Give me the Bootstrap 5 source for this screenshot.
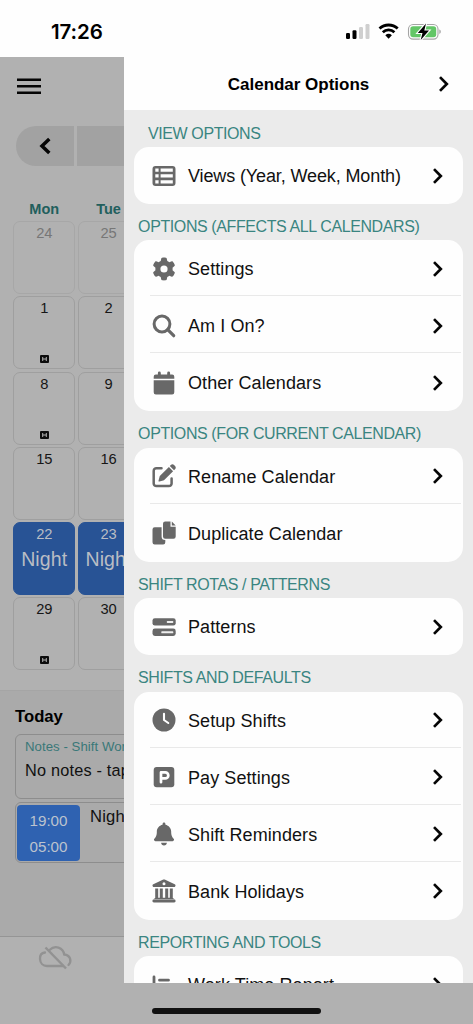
<!DOCTYPE html>
<html lang="en">
<head>
<meta charset="utf-8">
<meta name="viewport" content="width=device-width, initial-scale=1">
<title>Calendar Options</title>
<link rel="stylesheet" href="https://cdn.jsdelivr.net/npm/bootstrap@5.3.0/dist/css/bootstrap.min.css">
<style>
body{font-family:"Liberation Sans",Arial,sans-serif;background:#b1b1b1;color:#111;height:1024px;overflow:hidden;line-height:1}
.status{height:57px;background:#fefefe;padding:6px 31px 0 51px}
.clock{font:600 20.5px/1 Inter,sans-serif;letter-spacing:-.1px;color:#000;padding-top:1px}
.stage{height:926px}
.under{width:124px;background:#b1b1b1}
.topline{height:69px;padding:21px 0 0 17px}
.switcher{padding-left:16px;gap:2.5px}
.prev{width:58px;height:40px;background:#a2a2a2;border-radius:20px 0 0 20px}
.month-name{width:200px;height:40px;background:#a2a2a2}
.week{gap:2.5px;padding-left:13.3px;margin-bottom:2.3px}
.week-head{margin-top:36px;margin-bottom:4.5px}
.dow{width:61.8px;font-size:14.5px;font-weight:700;color:#215f5d}
.day{width:61.8px;height:73px;border:1px solid #9f9f9f;border-radius:7px;padding-top:4px;font-size:14.7px;letter-spacing:-.2px;color:#161616}
.day.faded{color:#777;border-color:#a7a7a7}
.day.night{background:#285395;border-color:#285395;color:#b9bdc4}
.shift{font-size:19.5px;letter-spacing:.1px;margin-top:8px}
.hol{width:9px;height:8px;margin-bottom:5px}
.today{margin-top:20px;height:247px;background:#aaa;border-top:1px solid #a5a5a5;border-bottom:1px solid #959595;padding:17px 0 0 15px}
.today h2{font-size:16.7px;font-weight:700;color:#000;margin:0;line-height:17px}
.note,.entry{width:300px;border:1px solid #8d8d8d;border-radius:6px}
.note{height:65px;margin-top:9px;padding:5px 9px}
.note-title{font-size:13.2px;letter-spacing:.05px;color:#397878}
.note-text{font-size:16.3px;letter-spacing:.2px;margin-top:8px}
.entry{height:61px;margin-top:3px;padding:2px 1px}
.hours{width:63px;height:56px;background:#2f62b1;border-radius:4px;color:#bcc3ce;font-size:15.2px;gap:10.5px}
.entry-name{font-size:16.6px;letter-spacing:.2px;padding:4px 0 0 10px}
.tabs{padding:6px 0 0 37px}
.drawer{width:349px;background:#ebebeb}
.drawer-head{height:53px;background:#fefefe;padding:1px 22px 0 36px}
.drawer-head h1{font-size:17px;font-weight:700;color:#000;margin:0;padding-top:2px;letter-spacing:-.02px}
.groups{padding:.7px 9.7px 0 9.5px}
.label-row{height:36.4px;padding:15px 0 0 4.6px;font-size:16px;letter-spacing:-.4px;color:#3a8581}
.label-first{padding-left:14.5px}
.options{background:#fefefe;border-radius:15px}
.option{height:57px;padding:0 18px 0 18px;font-size:18px;letter-spacing:.08px;position:relative}
.option span{margin-left:12.5px;padding-top:1px}
.option .tight{letter-spacing:-.12px}
.option:not(:last-child)::after{content:"";position:absolute;left:16px;right:2px;bottom:1px;height:1px;background:#e9e9e9}
.option .ico{width:24px;height:24px;fill:#686868}
.go{width:14px;height:18px;fill:none;stroke:#050505;stroke-width:2.7}
.home-zone{height:41px;background:#b1b1b1;padding-top:25px}
.home-bar{width:169px;height:6px;border-radius:3px;background:#111}
</style>
</head>
<body class="d-flex flex-column">
<svg class="d-none"><symbol id="go" viewBox="0 0 14 18"><path d="M3 2.1 9.8 9 3 15.9"/></symbol>
<symbol id="hol" viewBox="0 0 9 8"><rect width="9" height="8" rx="1" fill="#0c0c0c"/><path d="M2.7 2v4M6.3 2v4M2.7 4h3.6" stroke="#b1b1b1" stroke-width="1"/></symbol></svg>

<header class="status d-flex align-items-center justify-content-between flex-shrink-0">
  <div class="clock">17:26</div>
  <svg width="98" height="20" viewBox="0 1 98 20">
    <rect x="2" y="12" width="4" height="6" rx="1.2"/><rect x="8.5" y="9.3" width="4" height="8.7" rx="1.2"/>
    <g fill="#cfcfcf"><rect x="15" y="6" width="4" height="12" rx="1.2"/><rect x="21.5" y="3" width="4" height="15" rx="1.2"/></g>
    <g fill="none" stroke="#000" stroke-width="2.8"><path d="M35.5 7.600a13.300 13.300 0 0 1 18.200 0"/><path d="M38.800 11.200a8.400 8.400 0 0 1 11.600 0"/></g>
    <path d="M41.300 14.200a5 5 0 0 1 6.600 0l-3.300 3.600z"/>
    <rect x="64.500" y="3.500" width="29.500" height="14.600" rx="4.600" fill="none" stroke="#a5a5a5" stroke-width="1.100"/>
    <rect x="66.300" y="5.300" width="25.900" height="11" rx="2.800" fill="#63c667"/><path d="M95.300 8.600c2 .6 2 3.800 0 4.400z" fill="#a5a5a5"/>
    <path d="M82 2.500 73.800 11.900h4.700L76.700 19 85 9.500h-4.700z" stroke="#fefefe" stroke-width="2.200" paint-order="stroke"/>
  </svg>
</header>

<main class="stage d-flex flex-shrink-0">
  <section class="under overflow-hidden flex-shrink-0">
    <div class="topline"><svg width="24" height="17" viewBox="0 0 24 17" class="d-block"><path d="M0 1.700h24M0 8.200h24M0 14.700h24" stroke="#050505" stroke-width="2.400"/></svg></div>
    <div class="switcher d-flex">
      <div class="prev d-flex align-items-center justify-content-center flex-shrink-0"><svg width="14" height="18" viewBox="0 0 14 18"><path d="M11.300 2 4 9l7.300 7" fill="none" stroke="#050505" stroke-width="3.500"/></svg></div>
      <div class="month-name flex-shrink-0"></div>
    </div>
    <div class="week week-head d-flex text-center"><div class="dow flex-shrink-0">Mon</div><div class="dow flex-shrink-0">Tue</div></div>
    <div class="week d-flex"><div class="day faded text-center flex-shrink-0">24</div><div class="day faded text-center flex-shrink-0">25</div></div>
    <div class="week d-flex"><div class="day flex-shrink-0 d-flex flex-column align-items-center justify-content-between">1<svg class="hol"><use href="#hol"/></svg></div><div class="day text-center flex-shrink-0">2</div></div>
    <div class="week d-flex"><div class="day flex-shrink-0 d-flex flex-column align-items-center justify-content-between">8<svg class="hol"><use href="#hol"/></svg></div><div class="day text-center flex-shrink-0">9</div></div>
    <div class="week d-flex"><div class="day text-center flex-shrink-0">15</div><div class="day text-center flex-shrink-0">16</div></div>
    <div class="week d-flex"><div class="day night text-center flex-shrink-0">22<div class="shift">Night</div></div><div class="day night text-center flex-shrink-0">23<div class="shift">Night</div></div></div>
    <div class="week d-flex"><div class="day flex-shrink-0 d-flex flex-column align-items-center justify-content-between">29<svg class="hol"><use href="#hol"/></svg></div><div class="day text-center flex-shrink-0">30</div></div>
    <div class="today">
      <h2>Today</h2>
      <div class="note text-nowrap"><div class="note-title">Notes - Shift Work</div><div class="note-text">No notes - tap</div></div>
      <div class="entry d-flex"><div class="hours d-flex flex-column align-items-center justify-content-center"><div>19:00</div><div>05:00</div></div><div class="entry-name">Night</div></div>
    </div>
    <div class="tabs"><svg width="36" height="30" viewBox="0 0 36 30" fill="none" stroke="#929292" stroke-width="2.300" stroke-linecap="round"><path d="M8 9.500C4.300 10 2.800 13 3 16c.200 4 3 7 7 7h16M12.500 7C18 1.500 26.200 4.500 27.200 11.500c6 .500 8 6.500 4.300 10.500"/><path d="M8.500 4.500 29 25.500" stroke-linecap="butt" stroke-width="2.500"/></svg></div>
  </section>

  <aside class="drawer overflow-hidden flex-shrink-0">
    <div class="drawer-head d-flex align-items-center"><h1 class="flex-grow-1 text-center">Calendar Options</h1><svg class="go"><use href="#go"/></svg></div>
    <div class="groups">
      <div class="label-row label-first">VIEW OPTIONS</div>
      <div class="options">
        <div class="option d-flex align-items-center"><svg class="ico" viewBox="0 0 24 24"><path fill-rule="evenodd" d="M3.500 2h17A3 3 0 0 1 23.500 5v14a3 3 0 0 1-3 3h-17a3 3 0 0 1-3-3V5a3 3 0 0 1 3-3zM3.300 4.500v3.300h3.300V4.500zM8.600 4.500v3.300h12.200V4.500zM3.300 10.300v3.300h3.300v-3.300zM8.600 10.300v3.300h12.200v-3.300zM3.300 16.200v3.300h3.300v-3.300zM8.600 16.200v3.300h12.200v-3.300z"/></svg><span class="tight">Views (Year, Week, Month)</span><svg class="go ms-auto"><use href="#go"/></svg></div>
      </div>
      <div class="label-row">OPTIONS (AFFECTS ALL CALENDARS)</div>
      <div class="options">
        <div class="option d-flex align-items-center"><svg class="ico" viewBox="-11 -11 534 534"><path d="M495.900 166.600c3.200 8.700.5 18.400-6.400 24.600l-43.300 39.400c1.100 8.300 1.700 16.800 1.700 25.400s-.6 17.100-1.700 25.400l43.300 39.400c6.900 6.200 9.600 15.900 6.400 24.600-4.400 11.900-9.700 23.300-15.800 34.300l-4.700 8.100c-6.600 11-14 21.400-22.100 31.200-5.900 7.200-15.700 9.600-24.500 6.800l-55.700-17.700c-13.400 10.300-28.200 18.900-44 25.400l-12.500 57.100c-2 9.100-9 16.300-18.200 17.800-13.800 2.300-28 3.500-42.500 3.500s-28.700-1.200-42.500-3.500c-9.200-1.500-16.200-8.700-18.200-17.800l-12.500-57.100c-15.800-6.500-30.600-15.100-44-25.400L83.100 425.900c-8.800 2.800-18.600.3-24.500-6.800-8.100-9.800-15.500-20.200-22.100-31.200l-4.700-8.100c-6.100-11-11.400-22.400-15.800-34.300-3.200-8.700-.5-18.400 6.400-24.600l43.300-39.400C64.600 273.100 64 264.600 64 256s.6-17.100 1.700-25.400L22.400 191.200c-6.900-6.200-9.600-15.900-6.400-24.600 4.400-11.900 9.700-23.300 15.800-34.300l4.700-8.100c6.600-11 14-21.400 22.100-31.200 5.900-7.200 15.700-9.600 24.500-6.800l55.700 17.700c13.400-10.300 28.200-18.900 44-25.400l12.500-57.100c2-9.100 9-16.300 18.200-17.800C227.300 1.200 241.500 0 256 0s28.700 1.200 42.500 3.500c9.200 1.500 16.200 8.700 18.200 17.800l12.500 57.100c15.800 6.500 30.600 15.100 44 25.400l55.700-17.700c8.800-2.800 18.600-.3 24.500 6.800 8.100 9.800 15.500 20.200 22.100 31.200l4.700 8.100c6.100 11 11.400 22.400 15.800 34.300zM256 336a80 80 0 1 0 0-160 80 80 0 1 0 0 160z"/></svg><span>Settings</span><svg class="go ms-auto"><use href="#go"/></svg></div>
        <div class="option d-flex align-items-center"><svg class="ico" viewBox="0 0 24 24"><g fill="none" stroke="#686868"><circle cx="10" cy="10" r="7.900" stroke-width="3"/><path d="m15.700 15.700 6 6" stroke-width="3.200" stroke-linecap="round"/></g></svg><span>Am I On?</span><svg class="go ms-auto"><use href="#go"/></svg></div>
        <div class="option d-flex align-items-center"><svg class="ico" viewBox="0 0 24 24"><path d="M5.900 2a1.400 1.400 0 0 1 2.900 0v1.500h6.400V2a1.400 1.400 0 0 1 2.900 0v1.500h2A2.200 2.200 0 0 1 22.300 5.700v2H1.700v-2A2.200 2.200 0 0 1 3.900 3.500h2zM1.700 9.200h20.600v12a2.200 2.200 0 0 1-2.200 2.200H3.900a2.200 2.200 0 0 1-2.200-2.200z"/></svg><span>Other Calendars</span><svg class="go ms-auto"><use href="#go"/></svg></div>
      </div>
      <div class="label-row">OPTIONS (FOR CURRENT CALENDAR)</div>
      <div class="options">
        <div class="option d-flex align-items-center"><svg class="ico" viewBox="0 0 24 24"><path d="M9.500 4.200H4.400a2.700 2.700 0 0 0-2.700 2.700v12.500a2.700 2.700 0 0 0 2.700 2.700h12.500a2.700 2.700 0 0 0 2.700-2.700v-4.900" fill="none" stroke="#686868" stroke-width="2.500" stroke-linecap="round"/><path d="m16.900 3 4.200 4.200-8.600 8.600c-.4.400-.8.600-1.300.8l-3.800 1c-.6.100-1-.3-.9-.9l1-3.800c.1-.5.400-.9.800-1.300zM17.800 2.100l1-1a2.400 2.400 0 0 1 3.300 0l.9.900a2.400 2.400 0 0 1 0 3.300l-1 1z"/></svg><span>Rename Calendar</span><svg class="go ms-auto"><use href="#go"/></svg></div>
        <div class="option d-flex align-items-center"><svg class="ico" viewBox="0 0 24 24"><path d="M13.200.500h5.300v5.300h5.200V15.500a2.200 2.200 0 0 1-2.200 2.200h-8.300A2.200 2.200 0 0 1 11 15.500V2.700A2.200 2.200 0 0 1 13.200.500zM19.800.500l3.900 3.900h-3.900zM2.700 6.300h6.900v9.300a3.500 3.500 0 0 0 3.500 3.500h.2v2.100a2.200 2.200 0 0 1-2.200 2.200H2.700a2.200 2.200 0 0 1-2.200-2.200V8.500a2.200 2.200 0 0 1 2.200-2.200z"/></svg><span>Duplicate Calendar</span></div>
      </div>
      <div class="label-row">SHIFT ROTAS / PATTERNS</div>
      <div class="options">
        <div class="option d-flex align-items-center"><svg class="ico" viewBox="0 0 24 24"><rect x=".5" y="3.200" width="23.200" height="7.400" rx="2.400"/><rect x=".5" y="13.600" width="23.200" height="7.400" rx="2.400"/><g fill="#eee"><rect x="14.800" y="5.900" width="6.500" height="2" rx=".6"/><rect x="9.300" y="16.300" width="12" height="2" rx=".6"/></g></svg><span>Patterns</span><svg class="go ms-auto"><use href="#go"/></svg></div>
      </div>
      <div class="label-row">SHIFTS AND DEFAULTS</div>
      <div class="options">
        <div class="option d-flex align-items-center"><svg class="ico" viewBox="0 0 24 24"><circle cx="12" cy="12" r="11.500"/><path d="M12 5.700V12l4.300 3" fill="none" stroke="#fff" stroke-width="2.100" stroke-linecap="round" stroke-linejoin="round"/></svg><span>Setup Shifts</span><svg class="go ms-auto"><use href="#go"/></svg></div>
        <div class="option d-flex align-items-center"><svg class="ico" viewBox="0 0 24 24"><rect x="1.700" y="1.900" width="20.600" height="20.400" rx="3"/><path d="M9 17.200V7.400h4.300a3 3 0 0 1 0 6H9" fill="none" stroke="#fff" stroke-width="2.700" stroke-linecap="round" stroke-linejoin="round"/></svg><span>Pay Settings</span><svg class="go ms-auto"><use href="#go"/></svg></div>
        <div class="option d-flex align-items-center"><svg class="ico" viewBox="-43 -11 534 534"><path d="M224 0c-17.700 0-32 14.300-32 32v19.200C119 66 64 130.600 64 208v18.800c0 47-17.300 92.400-48.500 127.600l-7.400 8.300c-8.400 9.400-10.400 22.900-5.300 34.400S19.400 416 32 416h384c12.600 0 24-7.400 29.200-18.900s3.100-25-5.300-34.400l-7.400-8.300C401.300 319.200 384 273.900 384 226.800V208c0-77.400-55-142-128-156.800V32c0-17.700-14.300-32-32-32zm45.300 493.300c12-12 18.700-28.300 18.700-45.300H160c0 17 6.700 33.300 18.700 45.300s28.300 18.700 45.300 18.700 33.300-6.700 45.300-18.700z"/></svg><span>Shift Reminders</span><svg class="go ms-auto"><use href="#go"/></svg></div>
        <div class="option d-flex align-items-center"><svg class="ico" viewBox="0 0 24 24"><path fill-rule="evenodd" d="M11.300.600q.7-.4 1.400 0l10 4.600c1.400.7.900 2.900-.6 2.900H1.900C.4 8.100-.1 5.900 1.300 5.200zM12 3.300a1.500 1.500 0 1 0 0 3 1.500 1.500 0 0 0 0-3z"/><path d="M3.200 9.500h3v9.200h1.600V9.500h3v9.200h2.400V9.500h3v9.200h1.600V9.500h3v9.400l1.900 1.400H1.300l1.900-1.400z"/><rect x=".4" y="20.500" width="23.200" height="3" rx="1.400"/></svg><span>Bank Holidays</span><svg class="go ms-auto"><use href="#go"/></svg></div>
      </div>
      <div class="label-row">REPORTING AND TOOLS</div>
      <div class="options">
        <div class="option d-flex align-items-center"><svg class="ico" viewBox="0 0 24 24"><path d="M2 4v15q0 2 2 2h18M7.500 7.200h9M7.500 12.200h6M7.500 17h12" fill="none" stroke="#686868" stroke-width="2.800" stroke-linecap="round"/></svg><span>Work Time Report</span><svg class="go ms-auto"><use href="#go"/></svg></div>
      </div>
    </div>
  </aside>
</main>
<footer class="home-zone flex-shrink-0"><div class="home-bar mx-auto"></div></footer>
<script src="https://cdn.jsdelivr.net/npm/bootstrap@5.3.0/dist/js/bootstrap.bundle.min.js"></script>
</body>
</html>
